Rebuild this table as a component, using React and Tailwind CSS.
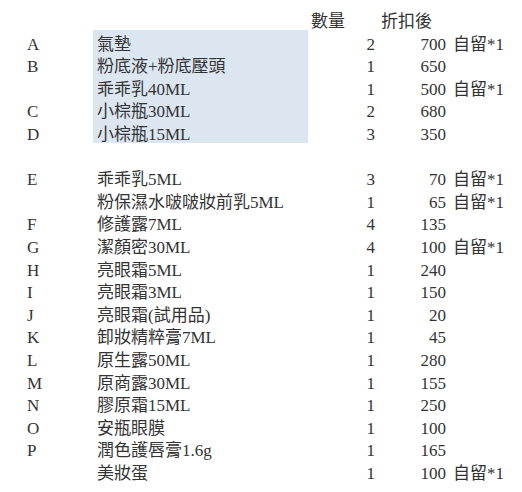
import React from 'react';

const top = [
  { code: 'A', name: '氣墊', qty: 2, price: 700, note: '自留*1' },
  { code: 'B', name: '粉底液+粉底壓頭', qty: 1, price: 650 },
  { code: '', name: '乖乖乳40ML', qty: 1, price: 500, note: '自留*1' },
  { code: 'C', name: '小棕瓶30ML', qty: 2, price: 680 },
  { code: 'D', name: '小棕瓶15ML', qty: 3, price: 350 },
];

const rest = [
  { code: 'E', name: '乖乖乳5ML', qty: 3, price: 70, note: '自留*1' },
  { code: '', name: '粉保濕水啵啵妝前乳5ML', qty: 1, price: 65, note: '自留*1' },
  { code: 'F', name: '修護露7ML', qty: 4, price: 135 },
  { code: 'G', name: '潔顏密30ML', qty: 4, price: 100, note: '自留*1' },
  { code: 'H', name: '亮眼霜5ML', qty: 1, price: 240 },
  { code: 'I', name: '亮眼霜3ML', qty: 1, price: 150 },
  { code: 'J', name: '亮眼霜(試用品)', qty: 1, price: 20 },
  { code: 'K', name: '卸妝精粹膏7ML', qty: 1, price: 45 },
  { code: 'L', name: '原生露50ML', qty: 1, price: 280 },
  { code: 'M', name: '原商露30ML', qty: 1, price: 155 },
  { code: 'N', name: '膠原霜15ML', qty: 1, price: 250 },
  { code: 'O', name: '安瓶眼膜', qty: 1, price: 100 },
  { code: 'P', name: '潤色護唇膏1.6g', qty: 1, price: 165 },
  { code: '', name: '美妝蛋', qty: 1, price: 100, note: '自留*1' },
];

const cell = 'h-[22.6px] flex items-end leading-[17px] whitespace-nowrap';

function Row({ item, blue }) {
  return (
    <>
      <div className={`${cell} pl-[27px]`}>{item.code}</div>
      <div className={`${cell} pl-[4px] ${blue ? 'bg-[#dce6f1]' : ''}`}>{item.name}</div>
      <div className={`${cell} justify-end pr-[3px]`}>{item.qty}</div>
      <div className={`${cell} justify-end pr-[3px]`}>{item.price}</div>
      <div className={`${cell} pl-[4px]`}>{item.note || ''}</div>
    </>
  );
}

export default function App() {
  return (
    <div
      className="w-[522px] h-[492px] bg-white text-[#333] text-[17px] pt-[7.5px] overflow-hidden"
      style={{ fontFamily: '"Liberation Serif", "Noto Sans CJK TC", serif' }}
    >
      <div className="grid grid-cols-[93px_215px_70px_71px_1fr]">
        {/* header */}
        <div className={cell}></div>
        <div className={cell}></div>
        <div className={`${cell} pl-[3px]`}>數量</div>
        <div className={`${cell} pl-[3px]`}>折扣後</div>
        <div className={cell}></div>

        {top.map((it, i) => (
          <Row key={'t' + i} item={it} blue />
        ))}

        {/* blank row */}
        <div className={`${cell} col-span-5`}></div>

        {rest.map((it, i) => (
          <Row key={'r' + i} item={it} />
        ))}
      </div>
    </div>
  );
}
